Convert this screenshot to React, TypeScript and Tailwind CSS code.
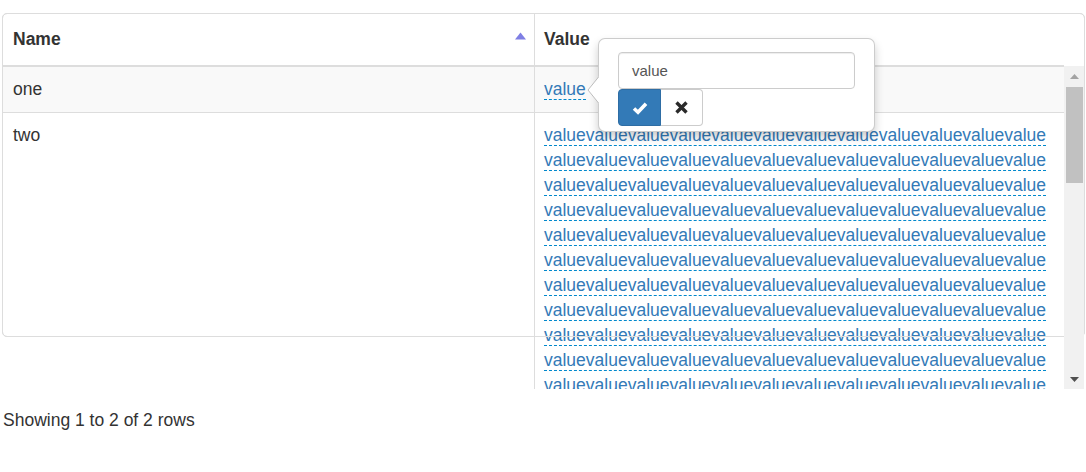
import React from "react";

function SortUp() {
  return (
    <svg width="11" height="8" viewBox="0 0 11 8" className="mb-[8px] shrink-0">
      <polygon points="0,7.5 5.5,0.5 11,7.5" fill="#7f7fe4" />
    </svg>
  );
}

function ArrowUp() {
  return (
    <svg width="9" height="5" viewBox="0 0 9 5">
      <polygon points="0,5 4.5,0 9,5" fill="#a3a3a3" />
    </svg>
  );
}

function ArrowDown() {
  return (
    <svg width="9" height="5" viewBox="0 0 9 5">
      <polygon points="0,0 4.5,5 9,0" fill="#505050" />
    </svg>
  );
}

function Check() {
  return (
    <svg width="16" height="14" viewBox="0 0 16 14">
      <path d="M2 7.5 L6 11.2 L14 2.8" fill="none" stroke="#fff" strokeWidth="3.6" strokeLinecap="butt" strokeLinejoin="miter" />
    </svg>
  );
}

function Cross() {
  return (
    <svg width="13" height="13" viewBox="0 0 13 13">
      <path d="M1.5 1.5 L11.5 11.5 M11.5 1.5 L1.5 11.5" fill="none" stroke="#2a2a2a" strokeWidth="3.4" />
    </svg>
  );
}

export default function App() {
  const longValue = "value".repeat(432);
  return (
    <div className="relative w-[1086px] h-[472px] overflow-hidden bg-white text-[#333] text-[17.5px] leading-[25px] font-['Liberation_Sans',Arial,sans-serif]">
      <div className="pt-[13px] pl-[2px]">
        {/* table container */}
        <div className="relative w-[1083px] h-[324px] rounded-[5px] border border-[#ddd]">
          {/* header */}
          <div className="flex h-[53px]">
            <div className="flex w-[1061px] border-b-2 border-[#ddd]">
              <div className="flex w-[531px] items-center justify-between pl-[10px] pr-[8px] font-bold">
                <span>Name</span>
                <SortUp />
              </div>
              <div className="flex flex-1 items-center border-l border-[#ddd] pl-[9px] font-bold">
                Value
              </div>
            </div>
            <div className="w-[20px]" />
          </div>
          {/* body */}
          <div className="flex h-[322px]">
            <div className="w-[1061px] overflow-hidden">
              <div className="flex h-[46px] border-b border-[#ddd] bg-[#f9f9f9]">
                <div className="w-[531px] px-[10px] py-[10px]">one</div>
                <div className="flex-1 border-l border-[#ddd] pl-[9px] py-[10px]">
                  <span className="border-b border-dashed border-[#0088cc] text-[#337ab7]">value</span>
                </div>
              </div>
              <div className="flex">
                <div className="w-[531px] px-[10px] py-[10px]">two</div>
                <div className="flex-1 border-l border-[#ddd] pl-[9px] py-[10px]">
                  <div className="w-[505px] break-all">
                    <span className="border-b border-dashed border-[#0088cc] text-[#337ab7]">{longValue}</span>
                  </div>
                </div>
              </div>
            </div>
            {/* scrollbar */}
            <div className="relative z-20 -mt-px flex h-[323px] w-[20px] flex-col bg-[#f1f1f1]">
              <div className="flex h-[20px] items-center justify-center">
                <ArrowUp />
              </div>
              <div className="ml-[2px] mt-px h-[96px] w-[17px] bg-[#c1c1c1]" />
              <div className="flex-1" />
              <div className="flex h-[20px] items-center justify-center">
                <ArrowDown />
              </div>
            </div>
          </div>
          {/* border drawn over overflowing content */}
          <div className="pointer-events-none absolute -inset-px z-10 rounded-[5px] border border-[#ddd]" />
        </div>
        <div className="mt-[71px] pl-px">Showing 1 to 2 of 2 rows</div>
      </div>

      {/* editable popover */}
      <div className="absolute left-[598px] top-[38px] z-30 h-[94px] w-[277px] rounded-[7px] border border-black/20 bg-white pl-[19px] pt-[13px] shadow-[0_5px_10px_rgba(0,0,0,0.2)]">
        <svg width="12" height="28" viewBox="0 0 12 28" className="absolute left-[-12px] top-[37px]">
          <polygon points="12,0 1,14 12,28" fill="#fff" />
          <polyline points="12,0.5 1,14 12,27.5" fill="none" stroke="rgba(0,0,0,0.25)" strokeWidth="1" />
        </svg>
        <div className="flex h-[37px] w-[237px] items-center rounded-[4px] border border-[#ccc] px-[13px] text-[15px] text-[#555] shadow-[inset_0_1px_1px_rgba(0,0,0,0.075)]">
          value
        </div>
        <div className="flex">
          <div className="flex h-[37px] w-[43px] items-center justify-center rounded-l-[4px] border border-[#2e6da4] bg-[#337ab7]">
            <Check />
          </div>
          <div className="flex h-[37px] w-[42px] items-center justify-center rounded-r-[4px] border border-l-0 border-[#ccc] bg-white">
            <Cross />
          </div>
        </div>
      </div>
    </div>
  );
}
